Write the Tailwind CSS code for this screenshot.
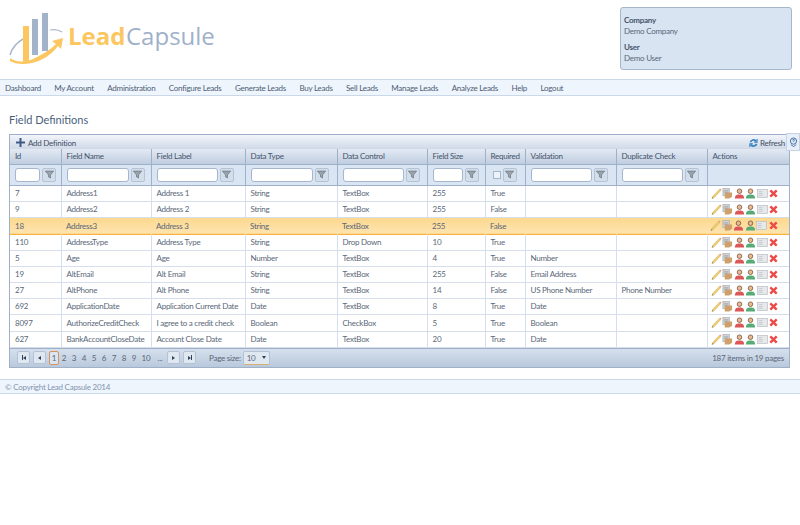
<!DOCTYPE html>
<html lang="en">
<head>
<meta charset="UTF-8">
<title>Field Definitions</title>
<script src="https://cdn.jsdelivr.net/npm/@tailwindcss/browser@4"></script>
</head>
<body class="bg-white h-[525px] overflow-hidden font-['Lato',sans-serif] text-[8px] tracking-[-0.25px] text-[#5a6778]">
<svg class="hidden">
  <symbol id="filter" viewBox="0 0 16 16"><path d="M2 3h12L9.500 8.500V13L6.500 11.500V8.500z" fill="#9aa3ac" stroke="#6b7580" stroke-width="1"/></symbol>
  <symbol id="pencil" viewBox="0 0 12 12"><path d="M1 11.500l1-2.500 7-7.500 1.500 1.500L3.500 10.500z" fill="#f2cf6a" stroke="#b39a55" stroke-width=".4"/><path d="M9 1.500l1.500 1.500 1-1.200L10 .5z" fill="#e79a82"/><path d="M1 11.500l.6-1.500 1 1z" fill="#666"/></symbol>
  <symbol id="docs" viewBox="0 0 12 12"><rect x="1" y="0.500" width="7" height="8" fill="#d2d5d8" stroke="#9a9fa6" stroke-width=".6"/><path d="M3 5h8v4.500L8 11.500H3z" fill="#cf9f6c"/><path d="M2 3h5M2 4.500h5" stroke="#8a8f95" stroke-width=".6"/></symbol>
  <symbol id="userred" viewBox="0 0 12 12"><circle cx="6" cy="3.500" r="2.500" fill="#e9b98f" stroke="#6b4a3a" stroke-width=".8"/><path d="M1 11.500c0-4 2-4.500 5-4.500s5 .5 5 4.500z" fill="#dc5557"/></symbol>
  <symbol id="usergreen" viewBox="0 0 12 12"><circle cx="6" cy="3.500" r="2.500" fill="#e9b98f" stroke="#6b4a3a" stroke-width=".8"/><path d="M1 11.500c0-4 2-4.500 5-4.500s5 .5 5 4.500z" fill="#57ab76"/></symbol>
  <symbol id="card" viewBox="0 0 12 12"><rect x="0.500" y="1.500" width="11" height="9" fill="#e6e8ea" stroke="#b5bac0" stroke-width=".7"/><path d="M2 4h4M2 6h4M2 8h4" stroke="#b5bac0" stroke-width=".7"/></symbol>
  <symbol id="cross" viewBox="0 0 12 12"><path d="M2.500 2.500l7 7M9.500 2.500l-7 7" stroke="#ee4a48" stroke-width="2.600"/></symbol>
</svg>

<header class="h-[79px] flex justify-between">
  <svg class="ml-[9px] mt-[12px] w-[210px] h-[56px] tracking-normal" viewBox="0 0 210 56">
    <path d="M1 43C3 36 7 31 14 27" fill="none" stroke="#a9b8cc" stroke-width="1.500"/>
    <rect x="23" y="7" width="6" height="36" fill="#a3b4ca"/>
    <rect x="33" y="1" width="6" height="38" fill="#a3b4ca"/>
    <path d="M41 18C46 17 50 18 53 20" fill="none" stroke="#a9b8cc" stroke-width="1.200"/>
    <rect x="14" y="14" width="6" height="36" fill="#fcc660"/>
    <path d="M1 46C6 50 14 51 24 47C32 43 40 39 47 32L43 29L54 26L52 37L49 34C42 43 33 49 23 51C14 53 6 52 1 49z" fill="#fcc660"/>
    <text x="59" y="33" font-family="Open Sans" font-weight="700" font-size="24" fill="#fcc660">Lead</text>
    <text x="117" y="33" font-family="Open Sans" font-size="24" fill="#9fb1c9">Capsule</text>
  </svg>
  <div class="mt-[7px] mr-[8px] w-[172px] h-[63px] bg-[#d8e4f2] border border-[#a6b6cd] rounded-[3px] pl-[3px] pt-[7px] leading-[11px] text-[#5a6778]">
    <div class="font-bold text-[#45546a]">Company</div>
    <div>Demo Company</div>
    <div class="font-bold text-[#45546a] mt-[5px]">User</div>
    <div>Demo User</div>
  </div>
</header>

<nav class="h-[17px] bg-[#eef5fd] border-y border-[#cbd8e8] flex items-center pl-[5px] gap-[13.400px] text-[#4f5e73]">
  <a>Dashboard</a><a>My Account</a><a>Administration</a><a>Configure Leads</a><a>Generate Leads</a><a>Buy Leads</a><a>Sell Leads</a><a>Manage Leads</a><a>Analyze Leads</a><a>Help</a><a>Logout</a>
</nav>

<main class="px-[9px] pr-[10px] h-[283px]">
  <h1 class="pt-[16px] h-[38px] text-[11px] tracking-normal leading-[16px] text-[#4a5f7e]">Field Definitions</h1>
  <div class="relative border border-[#9fb0c8]">
    <div class="h-[14px] flex items-center justify-between bg-gradient-to-b from-[#f2f5fa] to-[#cfd9e7] pl-[6px] pr-[4px] pt-[1px] text-[#3f4f65]">
      <div class="flex items-center gap-[3px]">
        <svg class="w-[9px] h-[9px]" viewBox="0 0 9 9"><path d="M3.500 0h2v3.500H9v2H5.500V9h-2V5.500H0v-2h3.500z" fill="#3f5a86"/></svg>
        <span>Add Definition</span>
      </div>
      <div class="flex items-center gap-[2px]">
        <svg class="w-[9px] h-[10px]" viewBox="0 0 10 10" fill="none" stroke="#2f7fc0" stroke-width="1.800"><path d="M1.500 4C2.500 1.500 6 .5 8 3"/><path d="M8.500 6C7.500 8.500 4 9.500 2 7"/><path d="M9 0.500V4H5.800M1 9.500V6h3.200" stroke-width="1.200"/></svg>
        <span>Refresh</span>
      </div>
    </div>
    <div class="absolute top-[-2px] right-[-11px] w-[14px] h-[18px] bg-[#e8eff8] border border-[#c6d3e4] flex items-center justify-center">
      <svg class="w-[9px] h-[10px]" viewBox="0 0 10 10"><circle cx="5" cy="4" r="3.500" fill="#dbe6f3" stroke="#3f6aa5"/><path d="M2 8l3 2 3-2" fill="none" stroke="#3f6aa5"/><path d="M4 3c0-1.200 2-1.200 2 0 0 .8-1 .8-1 1.700" fill="none" stroke="#2b4a7a" stroke-width=".8"/></svg>
    </div>
    <table class="w-full table-fixed border-collapse">
      <colgroup><col class="w-[51px]"><col class="w-[90px]"><col class="w-[94px]"><col class="w-[92px]"><col class="w-[90px]"><col class="w-[58px]"><col class="w-[40px]"><col class="w-[91px]"><col class="w-[91px]"><col></colgroup>
      <thead id="head"></thead>
      <tbody id="rows"></tbody>
    </table>
    <div class="h-[19px] flex items-center bg-gradient-to-b from-[#d5e0ed] to-[#b9c9dc] border-t border-[#9fb0c8] pl-[7px] pr-[5px]">
      <div id="pager" class="flex items-center"></div>
      <span class="ml-[10px]">Page size:</span>
      <div class="ml-[2px] w-[27px] h-[14px] bg-[#dfe7f1] border border-[#b3c2d5] border-b-[#d8b070] rounded-[2px] flex items-center justify-between px-[3px]"><span>10</span><span class="border-x-[2.500px] border-t-[3px] border-x-transparent border-t-[#33435a]"></span></div>
      <span class="ml-auto">187 items in 19 pages</span>
    </div>
  </div>
</main>

<footer class="h-[15px] bg-[#eef5fd] border-y border-[#cbd8e8] flex items-center pl-[5px] text-[#8494ad]">© Copyright Lead Capsule 2014</footer>

<script>
  const cols = ['Id', 'Field Name', 'Field Label', 'Data Type', 'Data Control', 'Field Size', 'Required', 'Validation', 'Duplicate Check', 'Actions'];
  const inputs = [25, 62, 61, 62, 61, 30, 0, 61, 61];
  const data = [
    ['7', 'Address1', 'Address 1', 'String', 'TextBox', '255', 'True', '', ''],
    ['9', 'Address2', 'Address 2', 'String', 'TextBox', '255', 'False', '', ''],
    ['18', 'Address3', 'Address 3', 'String', 'TextBox', '255', 'False', '', ''],
    ['110', 'AddressType', 'Address Type', 'String', 'Drop Down', '10', 'True', '', ''],
    ['5', 'Age', 'Age', 'Number', 'TextBox', '4', 'True', 'Number', ''],
    ['19', 'AltEmail', 'Alt Email', 'String', 'TextBox', '255', 'False', 'Email Address', ''],
    ['27', 'AltPhone', 'Alt Phone', 'String', 'TextBox', '14', 'False', 'US Phone Number', 'Phone Number'],
    ['692', 'ApplicationDate', 'Application Current Date', 'Date', 'TextBox', '8', 'True', 'Date', ''],
    ['8097', 'AuthorizeCreditCheck', 'I agree to a credit check', 'Boolean', 'CheckBox', '5', 'True', 'Boolean', ''],
    ['627', 'BankAccountCloseDate', 'Account Close Date', 'Date', 'TextBox', '20', 'True', 'Date', '']
  ];
  const heights = [16, 16, 17, 16, 16, 16, 16, 16, 17, 16];

  const funnel = '<span class="w-[14px] h-[14px] shrink-0 bg-[#d3deeb] border border-[#b5c3d6] rounded-[2px] flex items-center justify-center"><svg class="w-[11px] h-[11px]"><use href="#filter"/></svg></span>';
  const icon = id => `<svg class="w-[11px] h-[11px] shrink-0"><use href="#${id}"/></svg>`;
  const actions = '<div class="flex items-center gap-[0.500px] pl-[3px]">' + ['pencil', 'docs', 'userred', 'usergreen', 'card', 'cross'].map(icon).join('') + '</div>';

  let head = '<tr class="h-[15px] bg-gradient-to-b from-[#e3eaf3] to-[#bfcde0]">';
  cols.forEach(c => { head += `<th class="border-r border-[#9fb0c8] last:border-r-0 pl-[5px] text-left font-normal text-[#45546a] whitespace-nowrap">${c}</th>`; });
  head += '</tr><tr class="h-[21px] bg-[#d9e5f2] border-y border-[#9fb0c8]">';
  inputs.forEach((w, i) => {
    const field = w
      ? `<span class="h-[14px] bg-white border border-[#a6b6cd] rounded-[3px] shrink-0" style="width:${w}px"></span>`
      : '<span class="w-[8px] h-[8px] ml-[2px] bg-[#eef2f7] border border-[#a6b6cd] shrink-0"></span>';
    head += `<td class="border-r border-[#9fb0c8] pl-[5px]"><div class="flex items-center gap-[2px]">${field}${funnel}</div></td>`;
  });
  head += '<td></td></tr>';
  document.getElementById('head').innerHTML = head;

  document.getElementById('rows').innerHTML = data.map((row, r) => {
    const on = r === 2;
    const cells = row.map(v => `<td class="${on ? '' : 'border-r border-[#d5deea]'} pl-[5px] whitespace-nowrap">${v}</td>`).join('');
    return `<tr class="${on ? 'bg-gradient-to-b from-[#fdd98e] to-[#fde3ae] border-y border-[#fbb03b]' : 'border-b border-[#d5deea]'}" style="height:${heights[r]}px">${cells}<td>${actions}</td></tr>`;
  }).join('');

  const nav = inner => `<span class="w-[13px] h-[13px] mr-[3px] bg-[#dfe7f1] border border-[#b3c2d5] rounded-[2px] flex items-center justify-center gap-0 text-[#33435a]">${inner}</span>`;
  const left = '<span class="border-y-[2.500px] border-r-[3px] border-y-transparent border-r-[#33435a]"></span>';
  const right = '<span class="border-y-[2.500px] border-l-[3px] border-y-transparent border-l-[#33435a]"></span>';
  const bar = '<span class="w-[1px] h-[5px] bg-[#33435a]"></span>';
  let pager = nav(bar + left) + nav(left);
  pager += '<span class="w-[10px] h-[14px] bg-[#dbe5f0] border border-[#d8925a] rounded-[2px] text-center leading-[12px]">1</span>';
  ['2', '3', '4', '5', '6', '7', '8', '9', '10', '...'].forEach((p, i) => {
    pager += `<span class="${i < 8 ? 'w-[10px]' : 'w-[14px]'} text-center">${p}</span>`;
  });
  pager += nav(right) + nav(right + bar);
  document.getElementById('pager').innerHTML = pager;
</script>
</body>
</html>
